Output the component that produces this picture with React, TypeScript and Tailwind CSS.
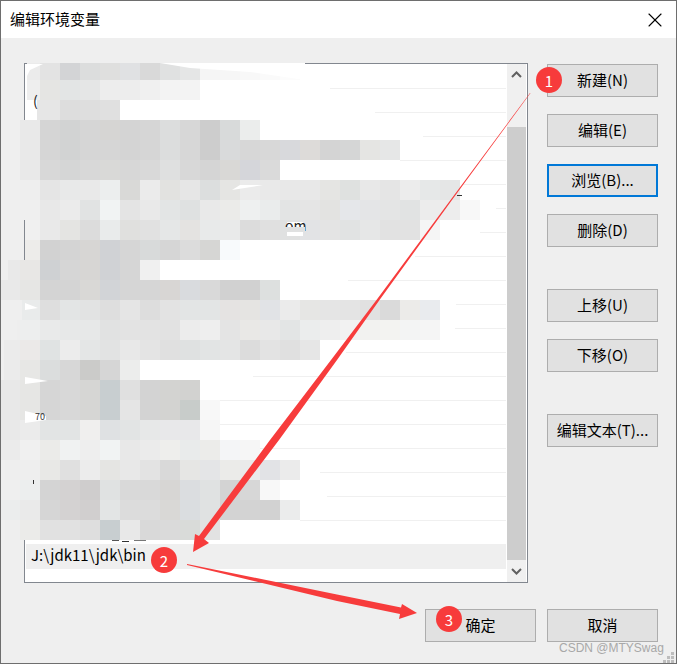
import { X } from 'lucide-react'

const TOP_BUTTONS = ['新建(N)', '编辑(E)']
const MID_BUTTONS = ['删除(D)']
const MOVE_BUTTONS = ['上移(U)', '下移(O)']

// pixelated smear over the hidden paths: [top, left, height, colours]
const MOSAIC: [number, number, number, string][] = [
  [63, 27, 17, 'ebebeb e3e3e3 d3d4d6 dcdddd dfdfde e0e1e3 d9d9d9 e0e1e1 e5e6e6 f5f5f5 f6f6f6 f8f8f8 fafafa fcfcfc'],
  [80, 27, 20, 'eeeeee e5e5e3 e3e5e5 e5e6e6 ededed ededed f0f0f0 f3f3f3 f3f3f3'],
  [100, 37, 20, 'e6e6e6 e6e6e6 dddddd dedede e0e0e0'],
  [120, 20, 20, 'e9e9e9 d5d5d5 d2d3d3 d6d6d6 d6d5d3 d4d4d4 d6d6d6 dcdddd d7d7d7 cdcdcd d8dada ebedec'],
  [140, 20, 20, 'e9e9e9 d6d6d6 d2d3d3 d6d6d6 d6d6d6 d4d4d4 d6d6d6 dcdddd d7d7d7 cdcdcd d9dadb d7d7d7 d8d8d8 d8d9dc dddbd9 d4d4d4 d5d6d6 e5e5e3 e6e7e7'],
  [160, 20, 20, 'e9e9e9 d8d8d8 d5d6d6 d8d8d8 d9d9d7 d7d7d7 d9d9d9 dfe0e0 d8d8d8 d5d5d5 d9d8d6 d5d6da dadada'],
  [180, 20, 20, 'eeeeee e5e5e5 e8e9e9 e9e9e9 eceeee d9d9d7 ebebeb e2e2e0 e6e6e6 dcdede e5e5e3 ebebeb e9e9e9 e8e8e8 e8e8e8 e5e5e3 dfe1e0 e8e8e8 e5e5e5 ececec e6e8e8 e5e6e6'],
  [200, 20, 20, 'efefef e8e8e8 ebebeb e1e3e3 f1f3f3 e4e4e4 e9e9e9 e3e5e5 dfe1e1 e9e9e9 ebebe9 eef0f0 eaecec e3e4e4 e5e5e5 e3e3e1 e5e7ea e4e5e7 e4e5e5 e1e3e3 ececec ededed f8f8f8'],
  [220, 25, 20, 'f0f0f0 e9e9e9 e4e4e2 dcdcdc e9ebeb e0e0de e1e1e1 e5e7e7 e4e3e1 e8eaea e9eaea dcdcdc e0e0e0 e0e1e1 e2e3e5 e4e4e4 e1e3e3 e6e7e7 e2e2e2 e2e2e2 f5f5f5'],
  [240, 25, 20, 'edecea d2d2d2 d4d4d4 d7d6d4 d0d2d5 d6d6d6 d8dada d6d6d6 dcdcdc d6d6d4 f8fafc'],
  [260, 8, 20, 'e9e9e9 e8e7e5 cfd1d3 d6d6d6 d7d6d4 d0d2d5 d6d6d6 f0f0f0'],
  [280, 0, 20, 'e9e9e9 e6e6e4 d4d4d4 d4d4d4 d9d8d6 d2d4d7 d6d6d6 d6d6d6 d8d6d4 d9dbde d9d9d9 d1d1d1 d1d1d1 dde0df'],
  [300, 22, 20, 'e9ebeb dedede e3e5e5 e2e3e3 dedede e5e5e5 dddddd e3e3e3 e3e5e5 e3e5e5 e5e3e2 e5e4e2 e1e3e6 ebebeb e6e6e4 e5e5e5 e4e4e4 e1e1e1 dadada ecebe9 e9ebee'],
  [320, 17, 20, 'eeeeee edeeee e9eaea e7e8e8 e7e8e8 e1e2e2 e3e3e3 e3e3e3 e2e2e2 ececec eeeeee e4e4e4 e9e8e6 e8e8e8 e3e5e5 ebeded eeeeee f2f2f2 f2f2f0 f3f3f1 f3f4f4 f5f5f5'],
  [340, 4, 20, 'ebebeb ebe9e8 e0e3e3 ececec e4e6e6 e2e3e3 e8e8e8 e4e4e4 e0e0e0 dfe1e1 e2e4e4 e4e5e5 dcdcdc e3e3e3 e0e0e0 e6e6e6'],
  [360, 4, 20, 'ebebeb e7e7e5 dbdddd d7d7d7 cbcbc9 d6d6d6 ecedec'],
  [380, 0, 20, 'e8e8e8 e6e6e4 d6d6d6 d8d8d8 d6d6d4 c8ced0 e0e0e0 d3d3d3 d3d3d1 d2d2d0'],
  [400, 0, 20, 'e8e8e8 e6e6e4 d6d6d6 d8d8d8 d6d6d4 c8ced0 e5e5e5 d3d3d3 d3d3d1 c8ccca f8f8f8'],
  [420, 0, 20, 'e9e9e9 ebebeb e2e4e4 e2e4e4 f0efee dfe1e3 e2e4e4 e7e8e8 e8e8ea e8e8ea f6f6f6'],
  [440, 0, 20, 'ebebeb f0f0f0 ebebe9 f0f2f2 eeeeee f1f3f3 e8e8e8 ebebeb eeeeec e9ebeb ececea f4f5f7 f6f6f6'],
  [460, 5, 20, 'eeeeee eeeeee e8e8e6 e0e0e0 ececec e5e5e3 e8e8e8 e3e3e3 d9d9d9 e6e6e4 e4e5e7 ebebe9 eaeaea e2e3e6 ebebeb'],
  [480, 20, 20, 'eceeee d4d4d4 d4d2d2 cfcdcd e0e2e2 d9d9d9 d9d9d9 d7d6d4 dbdde0 e0e2e2 d3d3d3 d7d7d7 f8f8f8'],
  [500, 0, 20, 'ebeded eaeaea d6d6d6 d4d2d2 d1cfcf e3e5e5 dcdcdc dcdcdc d9d8d6 dadde0 e0e2e2 d3d3d3 d3d3d3 d2d2d2 ebecec'],
  [520, 5, 20, 'eeeeee ebebe9 e1e1e1 e1e1e1 dedede c8ced0 e8e8e8 d9d9d9 dadada d9dbd9 e2e2e2'],
]

// row lines wiped out by the white brush: [y, wiped up to x]
const WIPED: [number, number][] = [
  [88, 330], [112, 375], [136, 423], [160, 400], [184, 463], [208, 496], [232, 480],
  [256, 415], [280, 348], [304, 456], [328, 455], [352, 346], [376, 253], [400, 207],
  [424, 210], [448, 250], [472, 320], [496, 327], [520, 300],
]

// white slivers the brush left at the edges of the smear
const SLIVERS = [
  '25,64 43,64 30,70 26,78 25,78',
  '160,63 305,63 305,80 250,72 190,68',
  '25,303 38,308 25,310',
  '25,377 48,381 25,384',
  '25,411 46,416 46,420 25,423',
  '232,190 263,185 240,185',
]

function Mosaic() {
  return (
    <>
      {WIPED.map(([y, x]) => (
        <rect key={y} x={25} y={y} width={x - 25} height={1} fill="#ffffff" />
      ))}
      {MOSAIC.map(([y, start, h, colours]) => {
        const first = Math.floor(start / 20) * 20 + 20
        return colours.split(' ').map((c, i) => {
          const x = i === 0 ? start : first + (i - 1) * 20
          const w = i === 0 ? first - start : 20
          return <rect key={`${y}-${i}`} x={x} y={y} width={w} height={h} fill={`#${c}`} />
        })
      })}
      {SLIVERS.map((p) => (
        <polygon key={p} points={p} fill="#ffffff" />
      ))}
      {/* bits of the paths that still show through */}
      <rect x="287" y="222" width="16" height="14" fill="#ffffff" />
      <text x="285" y="231" fontSize="14" fill="#222222">om</text>
      <rect x="285" y="227" width="20" height="5" fill="#e0e1e1" />
      <rect x="457" y="195" width="5" height="1" fill="#333333" />
      <rect x="33" y="480" width="1" height="4" fill="#333333" />
      <rect x="112" y="540" width="7" height="1" fill="#555555" />
      <rect x="122" y="541" width="7" height="1" fill="#333333" />
      <rect x="134" y="540" width="12" height="1" fill="#777777" />
      <text x="35" y="420" fontSize="9" fill="#333333">70</text>
    </>
  )
}

function DialogButton({ label, focused }: { label: string; focused?: boolean }) {
  return (
    <button
      className={`h-[33px] w-[111px] bg-[#e1e1e1] pb-[2px] text-[15px] leading-none text-black ${
        focused ? 'border-2 border-[#0078d7]' : 'border border-[#adadad]'
      }`}
    >
      {label}
    </button>
  )
}

function Badge({ n, className }: { n: number; className: string }) {
  return (
    <div
      className={`absolute flex h-[26px] w-[26px] items-center justify-center rounded-full bg-[#f73b3b] text-[15px] leading-none text-white ${className}`}
    >
      {n}
    </div>
  )
}

export default function App() {
  const rows = Array.from({ length: 18 })

  return (
    <div
      className="relative h-[664px] w-[677px] overflow-hidden border border-[#6e6e6e] bg-[#efefef]"
      style={{ fontFamily: '"Noto Sans CJK SC", "Noto Sans", sans-serif' }}
    >
      {/* Title bar */}
      <div className="flex h-[37px] items-center justify-between bg-white pl-[9px] pr-[9px]">
        <span className="text-[15px] text-black">编辑环境变量</span>
        <X className="h-6 w-6 text-black" strokeWidth={1.1} />
      </div>

      {/* Body */}
      <div className="flex gap-[19px] pl-[23px] pt-[25px]">
        <div className="flex h-[520px] w-[504px] border border-[#82878f] bg-white">
          <div className="w-[481px]">
            <div className="h-[25px] border-b border-[#f0f0f0]" />
            {rows.map((_, i) => (
              <div key={i} className="h-6 border-b border-[#f0f0f0]" />
            ))}
            <div className="h-[23px]" />
            <div className="ml-px flex h-[25px] items-center bg-[#efefef] pb-[2px] pl-[5px] text-[15px] text-black">
              J:\jdk11\jdk\bin
            </div>
          </div>
          <div className="ml-px flex w-[19px] flex-col items-center bg-[#f0f0f0]">
            <div className="flex h-[63px] w-full items-start justify-center pt-[7px]">
              <svg width="11" height="7" viewBox="0 0 11 7" fill="none" stroke="#606060" strokeWidth="2">
                <path d="M1 6l4.5-4.5L10 6" />
              </svg>
            </div>
            <div className="h-[433px] w-full bg-[#cdcdcd]" />
            <div className="flex flex-1 w-full items-center justify-center">
              <svg width="11" height="7" viewBox="0 0 11 7" fill="none" stroke="#606060" strokeWidth="2">
                <path d="M1 1l4.5 4.5L10 1" />
              </svg>
            </div>
          </div>
        </div>

        <div className="flex flex-col pt-px">
          <div className="flex flex-col gap-[17px]">
            {TOP_BUTTONS.map((b) => (
              <DialogButton key={b} label={b} />
            ))}
            <DialogButton label="浏览(B)..." focused />
            {MID_BUTTONS.map((b) => (
              <DialogButton key={b} label={b} />
            ))}
          </div>
          <div className="mt-[42px] flex flex-col gap-[17px]">
            {MOVE_BUTTONS.map((b) => (
              <DialogButton key={b} label={b} />
            ))}
          </div>
          <div className="mt-[42px]">
            <DialogButton label="编辑文本(T)..." />
          </div>
        </div>
      </div>

      {/* Footer buttons */}
      <div className="mt-[26px] flex justify-end gap-[11px] pr-[18px]">
        <DialogButton label="确定" />
        <DialogButton label="取消" />
      </div>

      {/* Annotations drawn on top of the screenshot */}
      <svg className="pointer-events-none absolute left-[-1px] top-[-1px]" width="677" height="664">
        <Mosaic />
        <text x="33" y="106" fontSize="14" fill="#1a1a1a">(</text>
        <polygon
          fill="#f73c3c"
          points="530,93 450.5,200 376.5,300 331,360 270,440 199,536 195,534 193,552 209,543 204,539 279,440 337,360 379.5,300 452,200 530.5,93"
        />
        <polygon
          fill="#f73c3c"
          points="187,564 337,594.5 401,607.5 402,604 417,613 399,619 400,614 337,601 187,565"
        />
        {/* resize grip */}
        <g fill="#bdbdbd">
          <rect x="671" y="652" width="3" height="3" />
          <rect x="667" y="656" width="3" height="3" />
          <rect x="671" y="656" width="3" height="3" />
          <rect x="663" y="660" width="3" height="3" />
          <rect x="667" y="660" width="3" height="3" />
          <rect x="671" y="660" width="3" height="3" />
        </g>
      </svg>

      <Badge n={1} className="left-[535px] top-[66px]" />
      <Badge n={2} className="left-[150px] top-[546px]" />
      <Badge n={3} className="left-[435px] top-[605px]" />

      <span
        className="absolute left-[558px] top-[640px] text-[12px] leading-[14px] text-[#a8a8a8]"
        style={{ fontFamily: '"Liberation Sans", sans-serif' }}
      >
        CSDN @MTYSwag
      </span>
    </div>
  )
}
